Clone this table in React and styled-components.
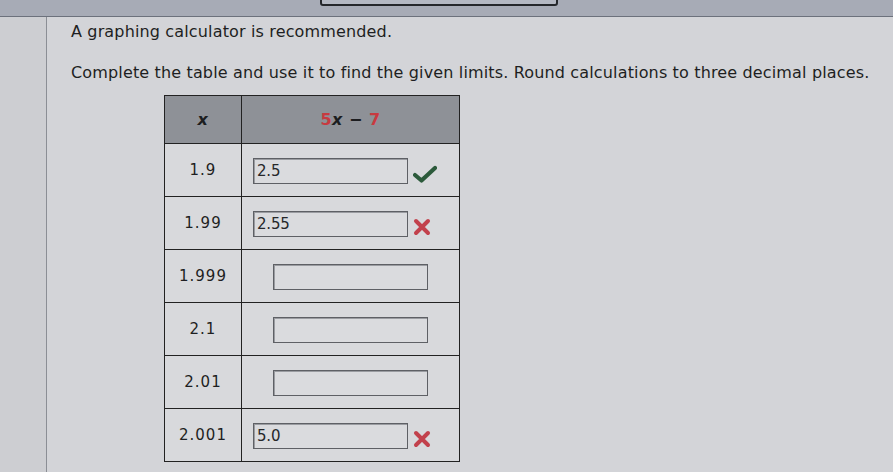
import React from 'react';
import styled, { createGlobalStyle } from 'styled-components';

const rows = [
    { x: '1.9', value: '2.5', mark: 'right' },
    { x: '1.99', value: '2.55', mark: 'wrong' },
    { x: '1.999', value: '' },
    { x: '2.1', value: '' },
    { x: '2.01', value: '' },
    { x: '2.001', value: '5.0', mark: 'wrong' },
];

const GlobalStyle = createGlobalStyle`
    html, body {
        margin: 0;
        padding: 0;
        background: #d2d3d7;
    }
    body {
        font-family: "DejaVu Sans", Verdana, sans-serif;
        color: #1e1f22;
    }
`;

const CheckIcon = () => (
    <svg width="24" height="18" viewBox="0 0 24 18">
        <path d="M2 10 L8.5 15.5 L22 3" fill="none" stroke="#2c5a3b" strokeWidth="4.2" strokeLinecap="round" strokeLinejoin="round" />
    </svg>
);

const CrossIcon = () => (
    <svg width="18" height="18" viewBox="0 0 18 18">
        <path d="M3 3 L15 15 M15 3 L3 15" fill="none" stroke="#c2414c" strokeWidth="4" strokeLinecap="round" />
    </svg>
);

export default function App() {
    return (
        <Page>
            <GlobalStyle />
            <TopBar>
                <TabEdge />
            </TopBar>
            <Body>
                <Sidebar />
                <Main>
                    <Line>A graphing calculator is recommended.</Line>
                    <Line>Complete the table and use it to find the given limits. Round calculations to three decimal places.</Line>
                    <Table>
                        <HeadCell>
                            <Var>x</Var>
                        </HeadCell>
                        <HeadCell>
                            <Red>5</Red><Var>x</Var>&nbsp;&minus;&nbsp;<Red>7</Red>
                        </HeadCell>
                        {rows.map((row) => (
                            <React.Fragment key={row.x}>
                                <XCell>{row.x}</XCell>
                                <ValueCell centered={!row.mark}>
                                    <Field>{row.value}</Field>
                                    {row.mark === 'right' && <Mark><CheckIcon /></Mark>}
                                    {row.mark === 'wrong' && <Mark><CrossIcon /></Mark>}
                                </ValueCell>
                            </React.Fragment>
                        ))}
                    </Table>
                </Main>
            </Body>
        </Page>
    );
}

const Page = styled.div`
    width: 893px;
    height: 472px;
    display: flex;
    flex-direction: column;
    overflow: hidden;
`;

const TopBar = styled.div`
    height: 16px;
    flex-shrink: 0;
    background: #a7abb6;
    border-bottom: 1px solid #6c717c;
    position: relative;
`;

const TabEdge = styled.div`
    position: absolute;
    left: 320px;
    top: -20px;
    width: 234px;
    height: 22px;
    border: 2px solid #25272b;
    border-radius: 0 0 3px 3px;
    background: #b4b8c2;
`;

const Body = styled.div`
    flex: 1;
    display: flex;
`;

const Sidebar = styled.div`
    width: 46px;
    flex-shrink: 0;
    background: #cdced2;
    border-right: 1px solid #8b8e95;
`;

const Main = styled.div`
    flex: 1;
    padding: 5px 0 0 24px;
    background: #d3d4d8;
`;

const Line = styled.p`
    margin: 0 0 22px;
    font-size: 16px;
    line-height: 19px;
    letter-spacing: 0.15px;
    white-space: nowrap;
`;

const Table = styled.div`
    margin: -9px 0 0 93px;
    width: 295px;
    display: grid;
    grid-template-columns: 77px 1fr;
    grid-template-rows: 48px repeat(6, 53px);
    border-top: 1px solid #222;
    border-left: 1px solid #222;
`;

const Cell = styled.div`
    border-right: 1px solid #222;
    border-bottom: 1px solid #222;
    display: flex;
    align-items: center;
`;

const HeadCell = styled(Cell)`
    background: #8e9197;
    justify-content: center;
    font-weight: bold;
    font-size: 16px;
    letter-spacing: 0.5px;
    color: #1c1d20;
`;

const Var = styled.span`
    font-style: italic;
    font-weight: bold;
`;

const Red = styled.span`
    color: #c83a40;
`;

const XCell = styled(Cell)`
    background: #d8d9dc;
    justify-content: center;
    font-size: 15px;
    letter-spacing: 1px;
`;

const ValueCell = styled(Cell)`
    background: #d8d9dc;
    justify-content: ${(props) => (props.centered ? 'center' : 'flex-start')};
    padding-left: ${(props) => (props.centered ? '0' : '11px')};
    padding-top: 2px;
    gap: 5px;
`;

const Field = styled.div`
    width: 150px;
    height: 24px;
    box-sizing: content-box;
    border: 1px solid #5e6065;
    box-shadow: inset 1px 1px 0 #9a9ca1;
    background: #dadbde;
    font-size: 15px;
    line-height: 24px;
    padding-left: 3px;
    letter-spacing: -0.2px;
    color: #26272a;
`;

const Mark = styled.span`
    display: flex;
    align-items: center;
    margin-top: 6px;
`;
